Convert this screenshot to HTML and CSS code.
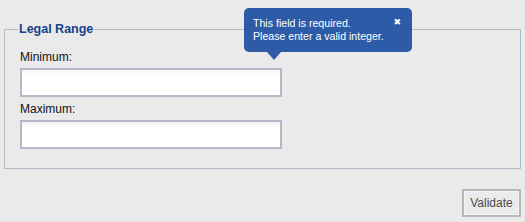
FILE: index.html
```html
<!DOCTYPE html>
<html>
<head>
<meta charset="utf-8">
<link rel="stylesheet" href="styles.css">
</head>
<body>
<div class="page">
  <fieldset class="range">
    <legend class="range-title">Legal Range</legend>
    <label class="field-label">Minimum:</label>
    <input class="field-input" type="text">
    <label class="field-label second">Maximum:</label>
    <input class="field-input" type="text">
  </fieldset>
  <div class="actions">
    <button class="btn">Validate</button>
  </div>
  <div class="tip">
    <div class="tip-text">This field is required.<br>Please enter a valid integer.</div>
    <span class="tip-close">&#x2716;</span>
    <span class="tip-arrow"></span>
  </div>
</div>
</body>
</html>
```
FILE: styles.css
```css
html, body {
  margin: 0;
  padding: 0;
  background: #eaeaea;
  width: 525px;
  height: 222px;
  overflow: hidden;
}
.page {
  position: relative;
  display: flow-root;
  width: 525px;
  height: 222px;
  font-family: "Liberation Sans", Arial, sans-serif;
  font-size: 11px;
  color: #000;
}
.range {
  margin: 21px 4px 0 4px;
  width: 517px;
  box-sizing: border-box;
  border: 1px solid #b5b8c8;
  padding: 13px 15px 19px 15px;
  display: flex;
  flex-direction: column;
  align-items: flex-start;
}
.range-title {
  font-weight: bold;
  font-size: 12.5px;
  color: #15428b;
  padding: 0 1px;
  margin-left: -2px;
  line-height: 16px;
}
.field-label {
  font-size: 12px;
  line-height: 15px;
  color: #111;
  margin-bottom: 3px;
}
.field-label.second {
  margin-top: 5px;
}
.field-input {
  width: 262px;
  height: 29px;
  box-sizing: border-box;
  border: 2px solid #b5b8c8;
  background: linear-gradient(#f4f4f4, #fff 6px);
  margin: 0;
  padding: 0 4px;
  outline: none;
}
.actions {
  display: flex;
  justify-content: flex-end;
  padding: 20px 4px 0 0;
}
.btn {
  width: 59px;
  height: 28px;
  box-sizing: border-box;
  border: 2px solid #b7b7b7;
  box-shadow: inset 0 0 0 1px #f4f4f4;
  background: #ebebeb;
  color: #4a4a4a;
  font-family: "Liberation Sans", Arial, sans-serif;
  font-size: 12px;
  padding: 0;
}
.tip {
  position: absolute;
  left: 244px;
  top: 8px;
  width: 168px;
  height: 44px;
  box-sizing: border-box;
  background: #2d5ba7;
  border-radius: 5px;
  color: #fff;
  padding: 9px 0 0 9px;
}
.tip-text {
  font-size: 10.6px;
  line-height: 13px;
}
.tip-close {
  position: absolute;
  right: 11px;
  top: 9px;
  font-size: 9px;
  font-weight: bold;
  font-family: "DejaVu Sans", sans-serif;
}
.tip-arrow {
  position: absolute;
  left: 23px;
  top: 44px;
  width: 0;
  height: 0;
  border-left: 7px solid transparent;
  border-right: 7px solid transparent;
  border-top: 8px solid #2d5ba7;
}
```
